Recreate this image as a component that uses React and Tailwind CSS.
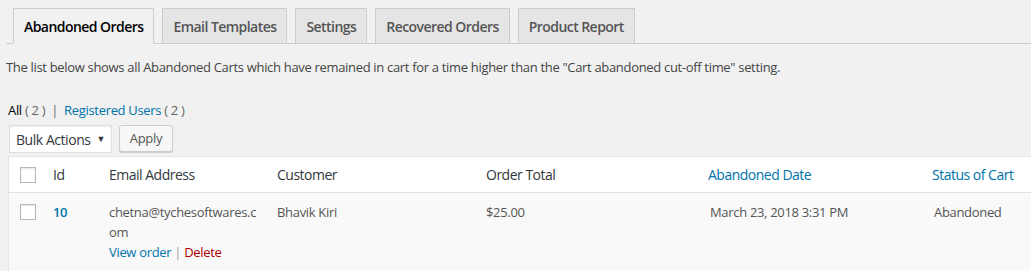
import React from "react";

const font = { fontFamily: '"Open Sans", "Noto Sans", sans-serif' };

function Tab({ label, active }) {
  return (
    <div
      className={
        "h-[36px] flex items-center px-[10px] border border-[#ccc] text-[14px] font-semibold tracking-[-0.55px] -mb-px " +
        (active
          ? "bg-[#f1f1f1] text-black border-b-[#f1f1f1]"
          : "bg-[#e5e5e5] text-[#555]")
      }
    >
      {label}
    </div>
  );
}

function Checkbox() {
  return <div className="w-[16px] h-[16px] border border-[#b4b9be] bg-white shadow-[inset_0_1px_2px_rgba(0,0,0,0.1)]" />;
}

export default function App() {
  return (
    <div className="w-[1031px] h-[271px] overflow-hidden bg-[#f1f1f1] text-[13px] tracking-[-0.32px] text-[#444]" style={font}>
      <div className="pt-[8px] pl-[6px]">
        <div className="flex gap-[8px] pl-[7px] border-b border-[#ccc]">
          <Tab label="Abandoned Orders" active />
          <Tab label="Email Templates" />
          <Tab label="Settings" />
          <Tab label="Recovered Orders" />
          <Tab label="Product Report" />
        </div>
        <p className="mt-[13px] leading-[20px]">
          The list below shows all Abandoned Carts which have remained in cart for a time higher than the "Cart abandoned cut-off time" setting.
        </p>
        <div className="mt-[23px] pl-[2px] leading-[20px] text-[#666]">
          <span className="text-black">All</span> ( 2 ) <span className="mx-[3px]">|</span>{" "}
          <span className="text-[#0073aa]">Registered Users</span> ( 2 )
        </div>
        <div className="mt-[5px] pl-[3px] flex gap-[7px] items-start">
          <div className="w-[103px] h-[28px] bg-white border border-[#ddd] flex items-center justify-between pl-[6px] pr-[6px] text-[#32373c] text-[14px] tracking-[-0.45px] whitespace-nowrap shadow-[inset_0_1px_2px_rgba(0,0,0,0.07)]">
            <span>Bulk Actions</span>
            <span className="text-[9px]">▼</span>
          </div>
          <div className="w-[54px] h-[27px] bg-[#f7f7f7] border border-[#ccc] rounded-[3px] flex items-center justify-center text-[#555] text-[13px] shadow-[0_1px_0_#ccc]">
            Apply
          </div>
        </div>
        <div className="mt-[3px] ml-[2px] w-[1040px] border border-[#e5e5e5] shadow-[0_1px_1px_rgba(0,0,0,0.04)]">
          <div className="grid grid-cols-[34px_56px_168px_209px_222px_224px_1fr] h-[36px] items-center bg-white border-b border-[#e1e1e1] text-[14px] tracking-[-0.5px] text-[#32373c]">
            <div className="pl-[11px] flex"><Checkbox /></div>
            <div className="pl-[10px]">Id</div>
            <div className="pl-[10px]">Email Address</div>
            <div className="pl-[10px]">Customer</div>
            <div className="pl-[10px]">Order Total</div>
            <div className="pl-[10px] text-[#0073aa]">Abandoned Date</div>
            <div className="pl-[10px] text-[#0073aa]">Status of Cart</div>
          </div>
          <div className="grid grid-cols-[34px_56px_168px_209px_222px_224px_1fr] bg-[#f9f9f9] pt-[9px] pb-[20px] text-[13px] leading-[20px] text-[#555]">
            <div className="pl-[11px] pt-[2px] flex items-start"><Checkbox /></div>
            <div className="pl-[10px] font-semibold text-[#0073aa]">10</div>
            <div className="pl-[10px]">
              <div>chetna@tychesoftwares.c<br />om</div>
              <div>
                <span className="text-[#0073aa]">View order</span>
                <span className="text-[#999]"> | </span>
                <span className="text-[#a00]">Delete</span>
              </div>
            </div>
            <div className="pl-[10px]">Bhavik Kiri</div>
            <div className="pl-[10px]">$25.00</div>
            <div className="pl-[12px]">March 23, 2018 3:31 PM</div>
            <div className="pl-[12px]">Abandoned</div>
          </div>
        </div>
      </div>
    </div>
  );
}
